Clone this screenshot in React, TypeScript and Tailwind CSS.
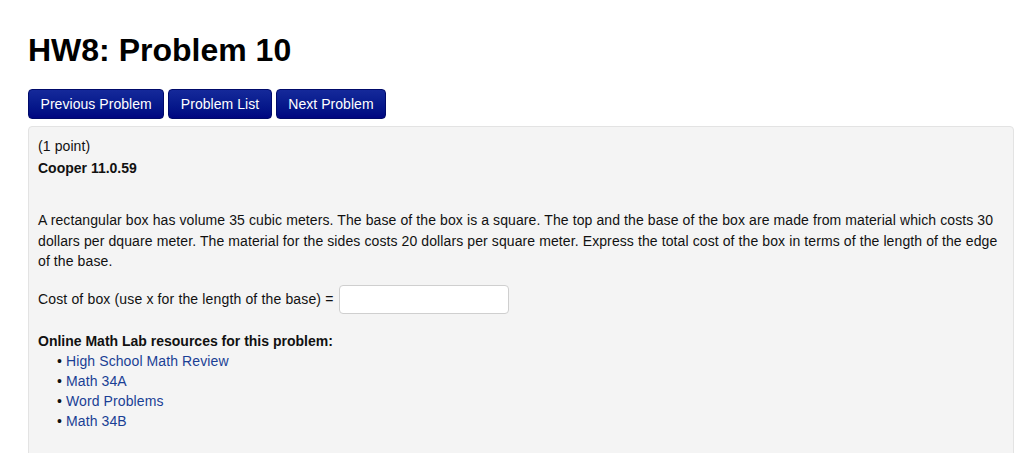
export default function App() {
  const links = ['High School Math Review', 'Math 34A', 'Word Problems', 'Math 34B'];
  const btn =
    'h-[30px] rounded-[4px] border border-[#000a6a] bg-gradient-to-b from-[#15299a] to-[#000680] px-[11.5px] text-[14px] tracking-[0.05px] text-white';

  return (
    <div className="min-h-[453px] bg-white pl-[28px] pr-[10px] pt-[32px] font-['Liberation_Sans',Arial,sans-serif] text-[#111]">
      <h1 className="text-[32px] font-bold leading-[36px] text-black">HW8: Problem 10</h1>

      <div className="mt-[21px] flex gap-[4px]">
        <button type="button" className={btn}>Previous Problem</button>
        <button type="button" className={btn}>Problem List</button>
        <button type="button" className={btn}>Next Problem</button>
      </div>

      <div className="mt-[7px] h-[340px] rounded-[4px] border border-[#e3e3e3] bg-[#f4f4f4] px-[9px] pt-[9px] text-[14px] leading-[20.5px] tracking-[0.1px]">
        <p>(1 point)</p>
        <p className="mt-[1px] font-bold tracking-[0px]">Cooper 11.0.59</p>

        <p className="mt-[32px]">
          A rectangular box has volume 35 cubic meters. The base of the box is a square. The top and the base of
          the box are made from material which costs 30 dollars per dquare meter. The material for the sides costs
          20 dollars per square meter. Express the total cost of the box in terms of the length of the edge of the
          base.
        </p>

        <div className="mt-[13px] flex items-center gap-[5px] tracking-[0.15px]">
          <span>Cost of box (use x for the length of the base) =</span>
          <input
            type="text"
            className="h-[29px] w-[170px] rounded-[4px] border border-[#cfcfcf] bg-white px-2 outline-none"
          />
        </div>

        <p className="mt-[17px] font-bold tracking-[0px]">Online Math Lab resources for this problem:</p>
        <ul className="pl-[19px] leading-[20px]">
          {links.map((l) => (
            <li key={l} className="flex gap-[4px]">
              <span>•</span>
              <a href="#" className="text-[#1a3f95]">
                {l}
              </a>
            </li>
          ))}
        </ul>
      </div>
    </div>
  );
}
